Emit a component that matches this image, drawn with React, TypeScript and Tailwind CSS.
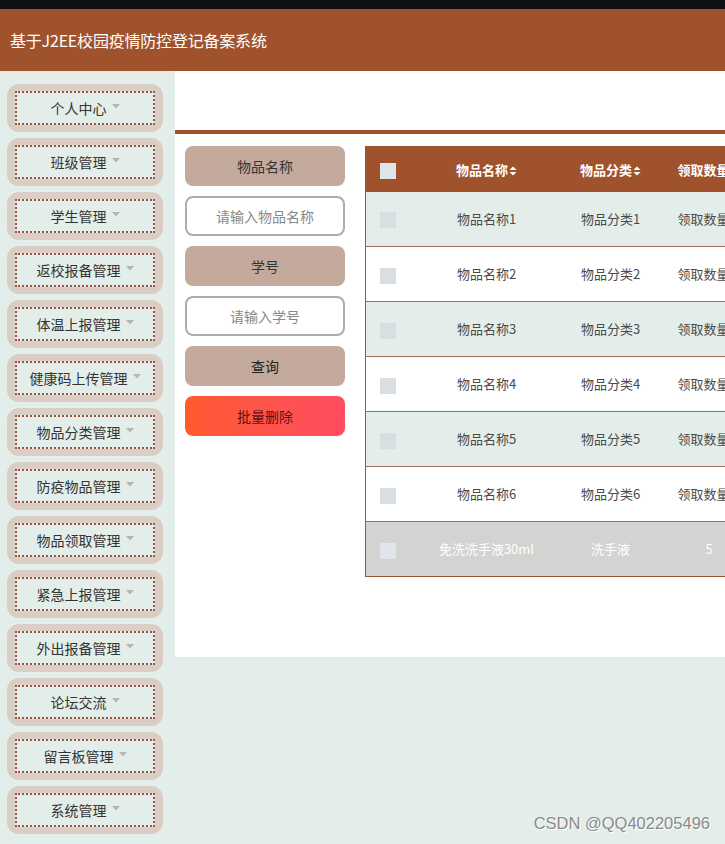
import React from "react";

const menus = [
  "个人中心",
  "班级管理",
  "学生管理",
  "返校报备管理",
  "体温上报管理",
  "健康码上传管理",
  "物品分类管理",
  "防疫物品管理",
  "物品领取管理",
  "紧急上报管理",
  "外出报备管理",
  "论坛交流",
  "留言板管理",
  "系统管理",
];

const rows = [
  { name: "物品名称1", cat: "物品分类1", num: "领取数量1" },
  { name: "物品名称2", cat: "物品分类2", num: "领取数量2" },
  { name: "物品名称3", cat: "物品分类3", num: "领取数量3" },
  { name: "物品名称4", cat: "物品分类4", num: "领取数量4" },
  { name: "物品名称5", cat: "物品分类5", num: "领取数量5" },
  { name: "物品名称6", cat: "物品分类6", num: "领取数量6" },
];

function SortIcon() {
  return (
    <svg width="8" height="10" viewBox="0 0 8 10" className="inline-block ml-[1px] align-[-1px]">
      <path d="M4 0.5L7.5 4H0.5Z" fill="#fff" />
      <path d="M4 9.5L7.5 6H0.5Z" fill="#fff" />
    </svg>
  );
}

function Caret() {
  return (
    <svg width="8" height="5" viewBox="0 0 8 5" className="ml-[5px] mb-[3px]">
      <path d="M0 0H8L4 4.5Z" fill="#b5b5b5" />
    </svg>
  );
}

function Check({ light }: { light?: boolean }) {
  return (
    <span
      className={
        "inline-block align-middle w-[16px] h-[16px] " +
        (light ? "bg-[#dfe5ea]" : "bg-[#d9dee2]")
      }
    />
  );
}

export default function App() {
  return (
    <div className="w-[725px] h-[844px] overflow-hidden bg-[#e3eeea] font-['Noto_Sans_CJK_SC','Microsoft_YaHei',sans-serif] relative">
      <div className="h-[9px] bg-[#101114]" />
      <header className="h-[62px] bg-[#a0522d] flex items-center px-[10px]">
        <h1 className="text-white text-[16px] tracking-[-0.2px]">基于J2EE校园疫情防控登记备案系统</h1>
      </header>

      <div className="flex">
        <aside className="w-[175px] shrink-0 pt-[13px] pl-[7px] flex flex-col gap-[6px]">
          {menus.map((m) => (
            <div
              key={m}
              className="w-[156px] h-[48px] rounded-[12px] bg-[#d9cdc4] px-[8px] py-[7px]"
            >
              <div className="h-full border-2 border-dotted border-[#9a5446] bg-[#e3eeea] flex items-center justify-center text-[14px] text-[#333]">
                {m}
                <Caret />
              </div>
            </div>
          ))}
        </aside>

        <main className="flex-1 min-w-0 h-[586px] bg-white overflow-hidden">
          <div className="h-[59px]" />
          <div className="h-[4px] bg-[#a0522d]" />
          <div className="flex pt-[12px] pl-[10px] gap-[20px]">
            <div className="w-[160px] shrink-0 flex flex-col gap-[10px] text-[14px]">
              <div className="h-[40px] rounded-[8px] bg-[#c4a99d] flex items-center justify-center text-[#333]">
                物品名称
              </div>
              <div className="h-[40px] rounded-[8px] border-2 border-[#b3aaaa] bg-white flex items-center justify-center text-[#888]">
                请输入物品名称
              </div>
              <div className="h-[40px] rounded-[8px] bg-[#c4a99d] flex items-center justify-center text-[#333]">
                学号
              </div>
              <div className="h-[40px] rounded-[8px] border-2 border-[#b3aaaa] bg-white flex items-center justify-center text-[#888]">
                请输入学号
              </div>
              <div className="h-[40px] rounded-[8px] bg-[#c4a99d] flex items-center justify-center text-[#222]">
                查询
              </div>
              <div className="h-[40px] rounded-[8px] bg-gradient-to-r from-[#ff5a2c] to-[#ff4c60] flex items-center justify-center text-[#5b1212]">
                批量删除
              </div>
            </div>

            <div className="flex-1 min-w-0 overflow-hidden">
              <table className="w-[420px] table-fixed border-collapse text-[13px] border border-[#a0522d]">
                <colgroup>
                  <col className="w-[45px]" />
                  <col className="w-[152px]" />
                  <col className="w-[96px]" />
                  <col className="w-[127px]" />
                </colgroup>
                <thead>
                  <tr className="h-[45px] bg-[#a0522d] text-white font-bold">
                    <th className="text-center">
                      <Check light />
                    </th>
                    <th className="text-center">
                      物品名称
                      <SortIcon />
                    </th>
                    <th className="text-center">
                      物品分类
                      <SortIcon />
                    </th>
                    <th className="text-left pl-[19px] whitespace-nowrap">领取数量</th>
                  </tr>
                </thead>
                <tbody>
                  {rows.map((r, i) => (
                    <tr
                      key={r.name}
                      className={
                        "h-[55px] border-b border-[#a36a55] text-[#4a4a4a] " +
                        (i % 2 === 0 ? "bg-[#e3eeea]" : "bg-white")
                      }
                    >
                      <td className="text-center">
                        <Check />
                      </td>
                      <td className="text-center">{r.name}</td>
                      <td className="text-center">{r.cat}</td>
                      <td className="text-left pl-[19px] whitespace-nowrap">{r.num}</td>
                    </tr>
                  ))}
                  <tr className="h-[55px] bg-[#d3d3d2] text-white">
                    <td className="text-center">
                      <Check light />
                    </td>
                    <td className="text-center">免洗洗手液30ml</td>
                    <td className="text-center">洗手液</td>
                    <td className="text-left pl-[47px]">5</td>
                  </tr>
                </tbody>
              </table>
            </div>
          </div>
        </main>
      </div>

      <div className="absolute right-[15px] bottom-[8px] text-[16.5px] text-[#8a8a8a] font-['Liberation_Sans',sans-serif] [text-shadow:1px_1px_0_#fff]">
        CSDN @QQ402205496
      </div>
    </div>
  );
}
